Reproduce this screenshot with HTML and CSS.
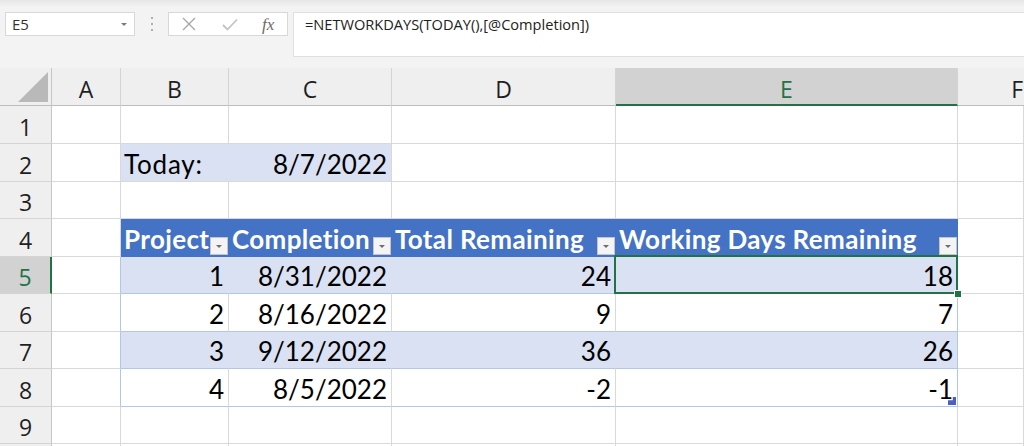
FILE: index.html
```html
<!DOCTYPE html>
<html>
<head>
<meta charset="utf-8">
<link rel="stylesheet" href="styles.css">
</head>
<body>
<div class="toolbar">
  <div class="namebox"><span>E5</span><span class="caret"></span></div>
  <div class="dots"><i></i><i></i><i></i></div>
  <div class="fxbox">
    <svg class="ico-x" width="14" height="14" viewBox="0 0 14 14"><path d="M1 1 L13 13 M13 1 L1 13" stroke="#a8a8a8" stroke-width="1.4" fill="none"/></svg>
    <svg class="ico-ok" width="16" height="13" viewBox="0 0 16 13"><path d="M1 7 L5.5 11.5 L15 1.5" stroke="#c4c4c4" stroke-width="1.8" fill="none"/></svg>
    <span class="fx">fx</span>
  </div>
  <div class="formula">=NETWORKDAYS(TODAY(),[@Completion])</div>
</div>
<div class="sheet">
  <div class="corner"><span class="tri"></span></div>
  <div class="ch">A</div><div class="ch">B</div><div class="ch">C</div><div class="ch">D</div><div class="ch act">E</div><div class="ch fcol">F</div>

  <div class="rh">1</div><div class="c"></div><div class="c"></div><div class="c"></div><div class="c"></div><div class="c"></div><div class="c"></div>

  <div class="rh">2</div><div class="c"></div><div class="c band inb lbl">Today:</div><div class="c band num">8/7/2022</div><div class="c"></div><div class="c"></div><div class="c"></div>

  <div class="rh">3</div><div class="c"></div><div class="c"></div><div class="c"></div><div class="c"></div><div class="c"></div><div class="c"></div>

  <div class="rh">4</div><div class="c"></div>
  <div class="c th"><span>Project</span><span class="fb"></span></div>
  <div class="c th"><span>Completion</span><span class="fb"></span></div>
  <div class="c th"><span>Total Remaining</span><span class="fb"></span></div>
  <div class="c th"><span>Working Days Remaining</span><span class="fb"></span></div>
  <div class="c"></div>

  <div class="rh act">5</div><div class="c tl"></div><div class="c tb band inb num">1</div><div class="c tb band inb num">8/31/2022</div><div class="c tb band inb num">24</div><div class="c tb band tr num sel">18</div><div class="c"></div>

  <div class="rh">6</div><div class="c tl"></div><div class="c tb num">2</div><div class="c tb num">8/16/2022</div><div class="c tb num">9</div><div class="c tb tr num">7</div><div class="c"></div>

  <div class="rh">7</div><div class="c tl"></div><div class="c tb band inb num">3</div><div class="c tb band inb num">9/12/2022</div><div class="c tb band inb num">36</div><div class="c tb band tr num">26</div><div class="c"></div>

  <div class="rh">8</div><div class="c tl"></div><div class="c tb num">4</div><div class="c tb num">8/5/2022</div><div class="c tb num">-2</div><div class="c tb tr num last">-1</div><div class="c"></div>

  <div class="rh">9</div><div class="c"></div><div class="c"></div><div class="c"></div><div class="c"></div><div class="c"></div><div class="c"></div>

  <div class="rh"></div><div class="c"></div><div class="c"></div><div class="c"></div><div class="c"></div><div class="c"></div><div class="c"></div>
</div>
</body>
</html>
```
FILE: styles.css
```css
* { box-sizing: border-box; }
html, body { margin: 0; padding: 0; }
body {
  width: 1024px;
  height: 446px;
  overflow: hidden;
  background: #f3f3f3;
  font-family: "Open Sans", "Noto Sans", sans-serif;
}

.toolbar {
  height: 68px;
  display: flex;
  align-items: flex-start;
  padding: 12px 0 0 5px;
  background: linear-gradient(#e6e6e6, #f3f3f3 7px);
}
.namebox {
  width: 130px;
  height: 24px;
  background: #fff;
  border: 1px solid #d8d8d8;
  display: flex;
  align-items: center;
  justify-content: space-between;
  padding: 0 7px 0 6px;
  font-size: 15px;
  color: #333;
}
.caret {
  width: 0;
  height: 0;
  border-left: 3px solid transparent;
  border-right: 3px solid transparent;
  border-top: 3px solid #7a7a7a;
}
.dots {
  width: 33px;
  display: flex;
  flex-direction: column;
  align-items: center;
  gap: 4px;
  padding-top: 5px;
}
.dots i {
  display: block;
  width: 2px;
  height: 2px;
  background: #b0b0b0;
}
.fxbox {
  width: 120px;
  height: 24px;
  background: #fff;
  border: 1px solid #d8d8d8;
  display: flex;
  align-items: center;
  padding-left: 13px;
}
.ico-ok { margin-left: 26px; }
.fx {
  margin-left: 24px;
  font-family: "Liberation Serif", serif;
  font-style: italic;
  font-size: 17px;
  color: #6a6a6a;
  line-height: 1;
}
.formula {
  margin-left: 5px;
  flex: 1;
  height: 45px;
  background: #fff;
  border: 1px solid #e0e0e0;
  border-right: none;
  padding: 1px 0 0 11px;
  font-size: 14.6px;
  color: #222;
}

.sheet {
  display: grid;
  grid-template-columns: 52px 69px 108px 163px 224px 342px 66px;
  grid-template-rows: 38px 38px 38px 37px 38px 37px 38px 37px 38px 37px 10px;
  background: #fff;
}

.corner {
  background: #efefef;
  border-right: 1px solid #c6c6c6;
  border-bottom: 1px solid #bdbdbd;
  position: relative;
}
.tri {
  position: absolute;
  right: 3px;
  bottom: 3px;
  width: 30px;
  height: 30px;
  background: #b9b9b9;
  clip-path: polygon(100% 0, 100% 100%, 0 100%);
}
.ch {
  background: #efefef;
  border-right: 1px solid #d4d4d4;
  border-bottom: 1px solid #bdbdbd;
  display: flex;
  align-items: flex-end;
  justify-content: center;
  padding-bottom: 4px;
  font-size: 23px;
  line-height: 23px;
  color: #1f1f1f;
}
.ch.fcol {
  justify-content: flex-end;
  padding-right: 1px;
  border-right: none;
}
.ch.act {
  background: #d2d2d2;
  color: #217346;
  border-bottom: 2px solid #217346;
  padding-bottom: 3px;
}
.rh {
  background: #efefef;
  border-right: 1px solid #c6c6c6;
  border-bottom: 1px solid #d4d4d4;
  display: flex;
  align-items: flex-end;
  justify-content: center;
  padding-bottom: 4px;
  font-size: 23px;
  line-height: 23px;
  color: #1f1f1f;
}
.rh.act {
  background: #d2d2d2;
  color: #217346;
  border-right: 2px solid #217346;
}

.c {
  border-right: 1px solid #d9d9d9;
  border-bottom: 1px solid #d9d9d9;
  display: flex;
  align-items: flex-end;
  padding: 0 4px 4px 3px;
  font-family: Lato, "Open Sans", sans-serif;
  font-size: 26px;
  line-height: 26px;
  color: #000;
  white-space: nowrap;
}
.lbl { letter-spacing: 0.8px; }
.num { justify-content: flex-end; }
.band { background: #d9e1f2; }
.inb { border-right-color: #d9e1f2; }
.tb { border-bottom-color: #b4c6e7; }
.tl, .tr { border-right-color: #b4c6e7; }

.th {
  background: #4472c4;
  border-right-color: #4472c4;
  border-bottom-color: #4472c4;
  color: #fff;
  font-weight: 700;
  padding-left: 3px;
  letter-spacing: 0.35px;
}
.fb {
  flex-shrink: 0;
  margin-left: auto;
  margin-right: -4px;
  margin-bottom: -3px;
  width: 18px;
  height: 18px;
  background: #f4f4f4;
  border: 1px solid #c4c4c4;
  position: relative;
}
.fb::after {
  content: "";
  position: absolute;
  left: 5px;
  top: 7px;
  border-left: 3px solid transparent;
  border-right: 3px solid transparent;
  border-top: 3px solid #6e6e6e;
}

.sel { position: relative; }
.sel::before {
  content: "";
  position: absolute;
  left: -2px;
  top: -2px;
  right: -1px;
  bottom: -1px;
  border: 2px solid #217346;
}
.sel::after {
  content: "";
  position: absolute;
  right: -4px;
  bottom: -4px;
  width: 6px;
  height: 6px;
  background: #217346;
  outline: 1px solid #fff;
}
.last { position: relative; }
.last::after {
  content: "";
  position: absolute;
  right: 1px;
  bottom: 1px;
  width: 8px;
  height: 8px;
  background: #4a5fc1;
  clip-path: polygon(100% 0, 100% 100%, 0 100%, 0 40%, 60% 40%, 60% 0);
}
```
